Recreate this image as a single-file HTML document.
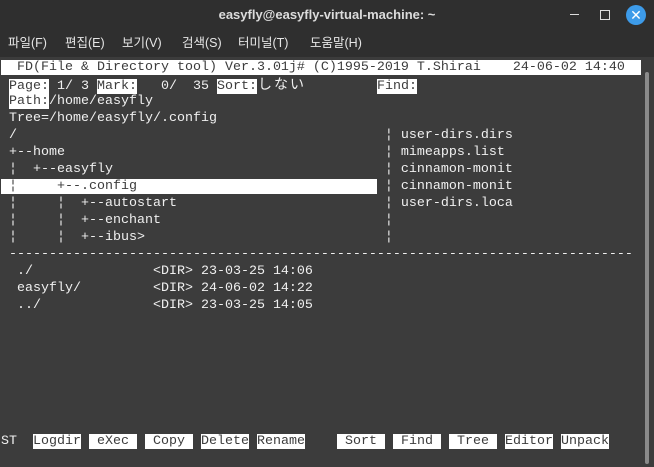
<!DOCTYPE html>
<html><head><meta charset="utf-8"><style>
html,body{margin:0;padding:0;width:654px;height:467px;overflow:hidden;background:#3c3c3c;}
#tb{position:absolute;left:0;top:0;width:654px;height:30px;background:#2f2f2f;color:#dcdcdc;font:bold 13px "Liberation Sans","Noto Sans CJK KR",sans-serif;text-align:center;line-height:30px;}
#mb{position:absolute;left:0;top:30px;width:654px;height:27px;background:#2f2f2f;color:#e6e6e6;font:12.5px "Liberation Sans","Noto Sans CJK KR",sans-serif;line-height:27px;}
#mb span{position:absolute;top:0}
#term{position:absolute;left:1px;top:59px;font:13.33px/17px "Liberation Mono","Noto Sans CJK JP",monospace;color:#f0f0f0;white-space:pre;}
.r{height:17px}
.i{background:#fff;color:#3c3c3c}
.j{display:inline-block;width:16px;text-align:center;font-family:"Noto Sans CJK JP",sans-serif;font-size:14px}
#sb{position:absolute;left:645px;top:72px;width:4px;height:392px;background:#8a8a8a;border-radius:2px}
</style></head><body>
<div id="tb">easyfly@easyfly-virtual-machine: ~</div>
<div style="position:absolute;left:570px;top:14px;width:9px;height:1px;background:#ddd"></div>
<div style="position:absolute;left:600px;top:10px;width:8px;height:8px;border:1px solid #ddd"></div>
<div style="position:absolute;left:626px;top:5px;width:20px;height:20px;border-radius:50%;background:#3d9be9;color:#fff;font:14px/20px 'Liberation Sans',sans-serif;text-align:center">✕</div>
<div id="mb"><span style="left:8px">파일(F)</span><span style="left:65px">편집(E)</span><span style="left:122px">보기(V)</span><span style="left:182px">검색(S)</span><span style="left:238px">터미널(T)</span><span style="left:310px">도움말(H)</span></div>
<div id="term"><div class="r"><span class="i">  FD(File &amp; Directory tool) Ver.3.01j# (C)1995-2019 T.Shirai    24-06-02 14:40  </span></div><div class="r"> <span class="i">Page:</span> 1/ 3 <span class="i">Mark:</span>   0/  35 <span class="i">Sort:</span><span class="j">し</span><span class="j">な</span><span class="j">い</span>         <span class="i">Find:</span></div><div class="r"> <span class="i">Path:</span>/home/easyfly</div><div class="r"> Tree=/home/easyfly/.config</div><div class="r"> /                                              ¦ user-dirs.dirs</div><div class="r"> +--home                                        ¦ mimeapps.list</div><div class="r"> ¦  +--easyfly                                  ¦ cinnamon-monit</div><div class="r"><span class="i"> ¦     +--.config                              </span> ¦ cinnamon-monit</div><div class="r"> ¦     ¦  +--autostart                          ¦ user-dirs.loca</div><div class="r"> ¦     ¦  +--enchant                            ¦</div><div class="r"> ¦     ¦  +--ibus&gt;                              ¦</div><div class="r"> ------------------------------------------------------------------------------</div><div class="r">  ./               &lt;DIR&gt; 23-03-25 14:06</div><div class="r">  easyfly/         &lt;DIR&gt; 24-06-02 14:22</div><div class="r">  ../              &lt;DIR&gt; 23-03-25 14:05</div><div class="r"> </div><div class="r"> </div><div class="r"> </div><div class="r"> </div><div class="r"> </div><div class="r"> </div><div class="r"> </div><div class="r">ST  <span class="i">Logdir</span> <span class="i"> eXec </span> <span class="i"> Copy </span> <span class="i">Delete</span> <span class="i">Rename</span>    <span class="i"> Sort </span> <span class="i"> Find </span> <span class="i"> Tree </span> <span class="i">Editor</span> <span class="i">Unpack</span></div></div>
<div id="sb"></div>
</body></html>
